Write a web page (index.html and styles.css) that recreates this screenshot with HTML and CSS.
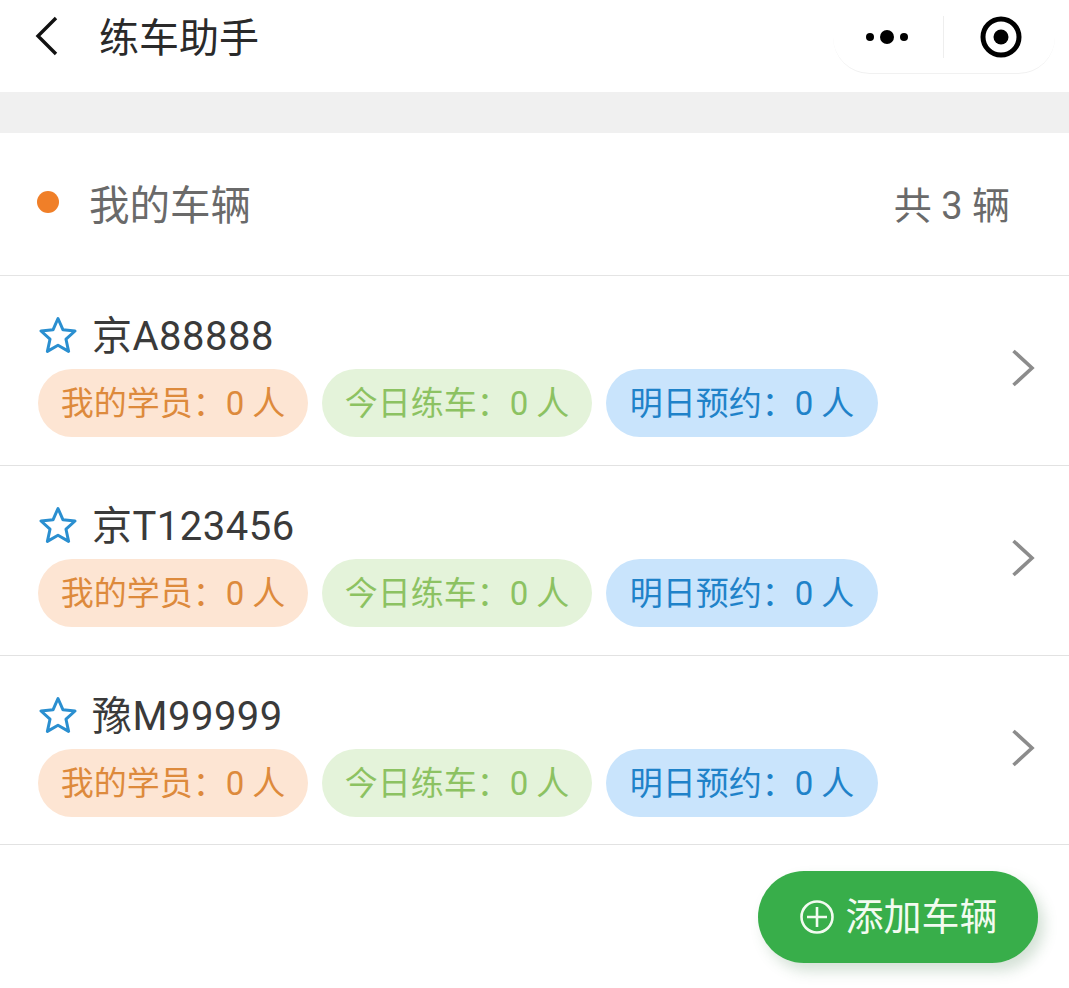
FILE: index.html
```html
<!DOCTYPE html>
<html lang="zh-CN">
<head>
<meta charset="utf-8">
<title>练车助手</title>
<link rel="stylesheet" href="styles.css">
</head>
<body>
<div class="page">
  <header class="nav">
    <svg class="back" viewBox="0 0 24 40" width="24" height="40"><path d="M22 2 4 20l18 18" fill="none" stroke="#111" stroke-width="3.4"/></svg>
    <h1 class="nav-title">练车助手</h1>
    <div class="capsule">
      <div class="capsule-more">
        <span class="dot small"></span><span class="dot big"></span><span class="dot small"></span>
      </div>
      <div class="capsule-sep"></div>
      <div class="capsule-close">
        <svg viewBox="0 0 42 42" width="42" height="42"><circle cx="21" cy="21" r="18" fill="none" stroke="#000" stroke-width="5"/><circle cx="21" cy="21" r="7.5" fill="#000"/></svg>
      </div>
    </div>
  </header>
  <div class="gap"></div>
  <section class="section-head">
    <span class="bullet"></span>
    <span class="section-title">我的车辆</span>
    <span class="section-count">共 3 辆</span>
  </section>
  <ul class="list">
    <li class="row">
      <div class="row-main">
        <div class="plate">
          <svg class="star" viewBox="0 0 38 38" width="38" height="38"><path d="M19 2.5l5 11.3 12 1.2-9 8.2 2.6 12.2L19 29.2 8.4 35.4 11 23.2 2 15l12-1.2z" fill="none" stroke="#2a8fd0" stroke-width="3" stroke-linejoin="round"/></svg>
          <span class="plate-no">京A88888</span>
        </div>
        <div class="tags">
          <span class="tag orange">我的学员：0 人</span>
          <span class="tag green">今日练车：0 人</span>
          <span class="tag blue">明日预约：0 人</span>
        </div>
      </div>
      <svg class="chev" viewBox="0 0 24 38" width="24" height="38"><path d="M2.5 2 21 19 2.5 36" fill="none" stroke="#8c8c8c" stroke-width="3.6"/></svg>
    </li>
    <li class="row">
      <div class="row-main">
        <div class="plate">
          <svg class="star" viewBox="0 0 38 38" width="38" height="38"><path d="M19 2.5l5 11.3 12 1.2-9 8.2 2.6 12.2L19 29.2 8.4 35.4 11 23.2 2 15l12-1.2z" fill="none" stroke="#2a8fd0" stroke-width="3" stroke-linejoin="round"/></svg>
          <span class="plate-no">京T123456</span>
        </div>
        <div class="tags">
          <span class="tag orange">我的学员：0 人</span>
          <span class="tag green">今日练车：0 人</span>
          <span class="tag blue">明日预约：0 人</span>
        </div>
      </div>
      <svg class="chev" viewBox="0 0 24 38" width="24" height="38"><path d="M2.5 2 21 19 2.5 36" fill="none" stroke="#8c8c8c" stroke-width="3.6"/></svg>
    </li>
    <li class="row">
      <div class="row-main">
        <div class="plate">
          <svg class="star" viewBox="0 0 38 38" width="38" height="38"><path d="M19 2.5l5 11.3 12 1.2-9 8.2 2.6 12.2L19 29.2 8.4 35.4 11 23.2 2 15l12-1.2z" fill="none" stroke="#2a8fd0" stroke-width="3" stroke-linejoin="round"/></svg>
          <span class="plate-no">豫M99999</span>
        </div>
        <div class="tags">
          <span class="tag orange">我的学员：0 人</span>
          <span class="tag green">今日练车：0 人</span>
          <span class="tag blue">明日预约：0 人</span>
        </div>
      </div>
      <svg class="chev" viewBox="0 0 24 38" width="24" height="38"><path d="M2.5 2 21 19 2.5 36" fill="none" stroke="#8c8c8c" stroke-width="3.6"/></svg>
    </li>
  </ul>
  <button class="fab">
    <svg class="fab-icon" viewBox="0 0 36 36" width="36" height="36"><circle cx="18" cy="18" r="15.5" fill="none" stroke="#f2fbf0" stroke-width="2.6"/><path d="M18 8v20M8 18h20" stroke="#f2fbf0" stroke-width="2.6"/></svg>
    <span class="fab-label">添加车辆</span>
  </button>
</div>
</body>
</html>
```

FILE: styles.css
```css
* { box-sizing: border-box; }
html, body { margin: 0; padding: 0; }
body {
  background: #fff;
  font-family: Roboto, "Noto Sans CJK SC", sans-serif;
}
.page {
  position: relative;
  width: 1069px;
  height: 988px;
  overflow: hidden;
  background: #fff;
}
.nav {
  height: 92px;
  display: flex;
  align-items: center;
  padding-left: 34px;
  padding-right: 14px;
}
.back { flex: none; margin-top: -20px; }
.nav-title {
  margin: -14px 0 0 41px;
  font-size: 40px;
  line-height: 56px;
  font-weight: 400;
  color: #2a2a2a;
  flex: 1;
}
.capsule {
  width: 222px;
  height: 74px;
  margin-top: -18px;
  border-bottom: 1px solid #f1f1f1;
  border-radius: 37px;
  display: flex;
  align-items: center;
}
.capsule-more {
  width: 108px;
  display: flex;
  align-items: center;
  justify-content: center;
  gap: 6px;
}
.dot { background: #000; border-radius: 50%; display: block; }
.dot.small { width: 8px; height: 8px; }
.dot.big { width: 14px; height: 14px; }
.capsule-sep { width: 1px; height: 42px; margin-left: 2px; background: #eee; }
.capsule-close {
  flex: 1;
  display: flex;
  justify-content: center;
  padding-left: 2px;
}
.gap { height: 41px; background: #f0f0f0; }
.section-head {
  height: 143px;
  border-bottom: 1px solid #e4e4e4;
  display: flex;
  align-items: center;
  padding: 0 59px 0 37px;
}
.bullet {
  width: 22px;
  height: 22px;
  border-radius: 50%;
  background: #f07f28;
  margin-top: -4px;
}
.section-title {
  margin-left: 30px;
  margin-top: 4px;
  font-size: 40.5px;
  line-height: 56px;
  color: #6a6a6a;
  flex: 1;
}
.section-count {
  margin-top: 4px;
  font-size: 38px;
  line-height: 56px;
  color: #6a6a6a;
}
.list { list-style: none; margin: 0; padding: 0; }
.row {
  height: 189.8px;
  border-bottom: 1px solid #e2e2e2;
  display: flex;
  align-items: center;
  padding: 0 34px 0 38px;
}
.row-main { flex: 1; padding-top: 4px; }
.plate {
  display: flex;
  align-items: center;
  height: 56px;
  margin-bottom: 6px;
}
.star { flex: none; margin-left: 1px; }
.plate-no {
  margin-left: 15px;
  margin-top: 4px;
  font-size: 40px;
  line-height: 56px;
  letter-spacing: 0.5px;
  color: #3a3a3a;
}
.tags { display: flex; gap: 14px; }
.tag {
  height: 68px;
  width: 270px;
  border-radius: 34px;
  display: flex;
  align-items: center;
  justify-content: center;
  padding-top: 2px;
  font-size: 33px;
  line-height: 46px;
  white-space: nowrap;
}
.tag.orange { background: #fde5d3; color: #dd8a3c; }
.tag.green { background: #e4f3da; color: #8cc262; }
.tag.blue { background: #c9e4fc; color: #1f82c9; width: 272px; }
.chev { flex: none; margin-top: -4px; }
.fab {
  position: absolute;
  left: 758px;
  top: 871px;
  width: 280px;
  height: 92px;
  border: 0;
  border-radius: 46px;
  background: #38ae4a;
  box-shadow: 6px 8px 14px rgba(60, 120, 70, 0.22);
  color: #f2fbf0;
  font-family: inherit;
  font-size: 38px;
  line-height: 52px;
  display: flex;
  align-items: center;
  justify-content: center;
  gap: 10px;
  padding: 0;
}
.fab-icon { margin-left: 1px; }
```
